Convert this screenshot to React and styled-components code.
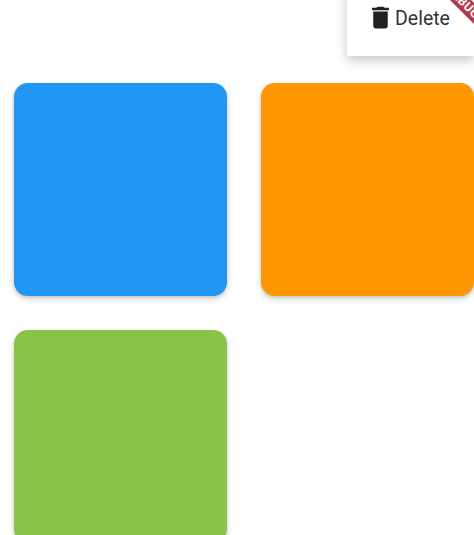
import React from 'react';
import styled, { createGlobalStyle } from 'styled-components';

const GlobalStyle = createGlobalStyle`
  html, body {
    margin: 0;
    height: 100%;
    background: #fff;
    overflow: hidden;
  }
`;

const Page = styled.div`
  position: relative;
  width: 474px;
  height: 535px;
  overflow: hidden;
  background: #fff;
`;

const Grid = styled.div`
  display: grid;
  grid-template-columns: repeat(2, 213px);
  grid-auto-rows: 213px;
  gap: 34px;
  padding: 83px 0 0 14px;
`;

const Tile = styled.div`
  border-radius: 14px;
  background: ${(p) => p.$color};
  box-shadow: 0 3px 6px rgba(0, 0, 0, 0.18), 0 1px 3px rgba(0, 0, 0, 0.1);
`;

const PopupMenu = styled.div`
  position: absolute;
  top: -10px;
  right: 0;
  width: 127px;
  height: 66px;
  box-sizing: border-box;
  padding: 13px 0 0 19px;
  display: flex;
  align-items: flex-start;
  background: #fff;
  box-shadow: 0 5px 10px rgba(0, 0, 0, 0.17), 0 1px 14px rgba(0, 0, 0, 0.08);
`;

const MenuLabel = styled.span`
  font-family: Roboto, "Liberation Sans", sans-serif;
  font-size: 19.5px;
  line-height: 31px;
  color: #333;
`;

const TrashIcon = styled.svg`
  width: 29px;
  height: 29px;
  fill: #212121;
  flex: none;
`;

const DebugBanner = styled.div`
  position: absolute;
  top: -5px;
  right: -39px;
  width: 100px;
  height: 15px;
  transform: rotate(45deg);
  background: #b23a4c;
  color: #fff;
  font-family: Roboto, "Liberation Sans", sans-serif;
  font-size: 12px;
  font-weight: 700;
  line-height: 15px;
  text-align: center;
  letter-spacing: 0.5px;
`;

const TILES = ['#2196f3', '#ff9800', '#8bc34a'];

export default function App() {
  return (
    <Page>
      <GlobalStyle />
      <Grid>
        {TILES.map((color) => (
          <Tile key={color} $color={color} />
        ))}
      </Grid>
      <PopupMenu>
        <TrashIcon viewBox="0 0 24 24">
          <path d="M6 19c0 1.1.9 2 2 2h8c1.1 0 2-.9 2-2V7H6v12zM19 4h-3.5l-1-1h-5l-1 1H5v2h14V4z" />
        </TrashIcon>
        <MenuLabel>Delete</MenuLabel>
      </PopupMenu>
      <DebugBanner>DEBUG</DebugBanner>
    </Page>
  );
}
